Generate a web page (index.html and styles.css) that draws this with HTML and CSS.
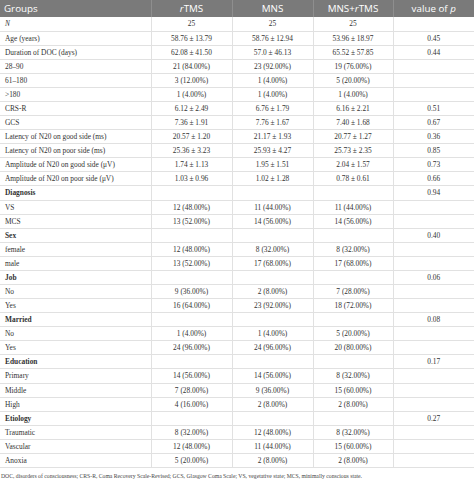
FILE: index.html
```html
<!DOCTYPE html>
<html>
<head>
<meta charset="utf-8">
<link rel="stylesheet" href="styles.css">
</head>
<body>
<table class="tbl">
<colgroup><col class="c1"><col class="c2"><col class="c3"><col class="c4"><col class="c5"></colgroup>
<thead>
<tr><th class="first">Groups</th><th><i>r</i>TMS</th><th>MNS</th><th>MNS+<i>r</i>TMS</th><th>value of <i>p</i></th></tr>
</thead>
<tbody>
<tr><td><i>N</i></td><td>25</td><td>25</td><td>25</td><td></td></tr>
<tr><td>Age (years)</td><td>58.76 ± 13.79</td><td>58.76 ± 12.94</td><td>53.96 ± 18.97</td><td>0.45</td></tr>
<tr><td>Duration of DOC (days)</td><td>62.08 ± 41.50</td><td>57.0 ± 46.13</td><td>65.52 ± 57.85</td><td>0.44</td></tr>
<tr><td>28–90</td><td>21 (84.00%)</td><td>23 (92.00%)</td><td>19 (76.00%)</td><td></td></tr>
<tr><td>61–180</td><td>3 (12.00%)</td><td>1 (4.00%)</td><td>5 (20.00%)</td><td></td></tr>
<tr><td>&gt;180</td><td>1 (4.00%)</td><td>1 (4.00%)</td><td>1 (4.00%)</td><td></td></tr>
<tr><td>CRS-R</td><td>6.12 ± 2.49</td><td>6.76 ± 1.79</td><td>6.16 ± 2.21</td><td>0.51</td></tr>
<tr><td>GCS</td><td>7.36 ± 1.91</td><td>7.76 ± 1.67</td><td>7.40 ± 1.68</td><td>0.67</td></tr>
<tr><td>Latency of N20 on good side (ms)</td><td>20.57 ± 1.20</td><td>21.17 ± 1.93</td><td>20.77 ± 1.27</td><td>0.36</td></tr>
<tr><td>Latency of N20 on poor side (ms)</td><td>25.36 ± 3.23</td><td>25.93 ± 4.27</td><td>25.73 ± 2.35</td><td>0.85</td></tr>
<tr><td>Amplitude of N20 on good side (μV)</td><td>1.74 ± 1.13</td><td>1.95 ± 1.51</td><td>2.04 ± 1.57</td><td>0.73</td></tr>
<tr><td>Amplitude of N20 on poor side (μV)</td><td>1.03 ± 0.96</td><td>1.02 ± 1.28</td><td>0.78 ± 0.61</td><td>0.66</td></tr>
<tr><td class="b">Diagnosis</td><td></td><td></td><td></td><td>0.94</td></tr>
<tr><td>VS</td><td>12 (48.00%)</td><td>11 (44.00%)</td><td>11 (44.00%)</td><td></td></tr>
<tr><td>MCS</td><td>13 (52.00%)</td><td>14 (56.00%)</td><td>14 (56.00%)</td><td></td></tr>
<tr><td class="b">Sex</td><td></td><td></td><td></td><td>0.40</td></tr>
<tr><td>female</td><td>12 (48.00%)</td><td>8 (32.00%)</td><td>8 (32.00%)</td><td></td></tr>
<tr><td>male</td><td>13 (52.00%)</td><td>17 (68.00%)</td><td>17 (68.00%)</td><td></td></tr>
<tr><td class="b">Job</td><td></td><td></td><td></td><td>0.06</td></tr>
<tr><td>No</td><td>9 (36.00%)</td><td>2 (8.00%)</td><td>7 (28.00%)</td><td></td></tr>
<tr><td>Yes</td><td>16 (64.00%)</td><td>23 (92.00%)</td><td>18 (72.00%)</td><td></td></tr>
<tr><td class="b">Married</td><td></td><td></td><td></td><td>0.08</td></tr>
<tr><td>No</td><td>1 (4.00%)</td><td>1 (4.00%)</td><td>5 (20.00%)</td><td></td></tr>
<tr><td>Yes</td><td>24 (96.00%)</td><td>24 (96.00%)</td><td>20 (80.00%)</td><td></td></tr>
<tr><td class="b">Education</td><td></td><td></td><td></td><td>0.17</td></tr>
<tr><td>Primary</td><td>14 (56.00%)</td><td>14 (56.00%)</td><td>8 (32.00%)</td><td></td></tr>
<tr><td>Middle</td><td>7 (28.00%)</td><td>9 (36.00%)</td><td>15 (60.00%)</td><td></td></tr>
<tr><td>High</td><td>4 (16.00%)</td><td>2 (8.00%)</td><td>2 (8.00%)</td><td></td></tr>
<tr><td class="b">Etiology</td><td></td><td></td><td></td><td>0.27</td></tr>
<tr><td>Traumatic</td><td>8 (32.00%)</td><td>12 (48.00%)</td><td>8 (32.00%)</td><td></td></tr>
<tr><td>Vascular</td><td>12 (48.00%)</td><td>11 (44.00%)</td><td>15 (60.00%)</td><td></td></tr>
<tr><td>Anoxia</td><td>5 (20.00%)</td><td>2 (8.00%)</td><td>2 (8.00%)</td><td></td></tr>
</tbody>
</table>
<p class="note">DOC, disorders of consciousness; CRS-R, Coma Recovery Scale-Revised; GCS, Glasgow Coma Scale; VS, vegetative state; MCS, minimally conscious state.</p>
</body>
</html>
```
FILE: styles.css
```css
html, body {
  margin: 0;
  padding: 0;
  background: #ffffff;
}
body {
  width: 474px;
  font-family: "Liberation Serif", "Times New Roman", serif;
  color: #333333;
}
.tbl {
  width: 474px;
  border-collapse: collapse;
  table-layout: fixed;
}
.c1 { width: 151px; }
.c2 { width: 81px; }
.c3 { width: 81px; }
.c4 { width: 80px; }
.c5 { width: 81px; }
.tbl th {
  background: #7a7a7a;
  color: #ffffff;
  font-family: "Open Sans", "Noto Sans", sans-serif;
  font-weight: 400;
  font-size: 9.8px;
  height: 17px;
  padding: 0;
  text-align: center;
  border-left: 1px solid #8e8e8e;
  line-height: 17px;
}
.tbl th.first {
  text-align: left;
  padding-left: 4px;
  border-left: none;
}
.tbl td {
  font-size: 7.4px;
  height: 14.08px;
  padding: 0;
  line-height: 13px;
  text-align: center;
  border-bottom: 1px solid #e1e1e1;
  border-left: 1px solid #e1e1e1;
  box-sizing: border-box;
  white-space: nowrap;
}
.tbl td:first-child {
  text-align: left;
  padding-left: 5px;
  border-left: none;
}
.tbl td.b {
  font-weight: 700;
}
.note {
  margin: 5px 0 0 1px;
  font-size: 5.7px;
  color: #444444;
  white-space: nowrap;
}
```
